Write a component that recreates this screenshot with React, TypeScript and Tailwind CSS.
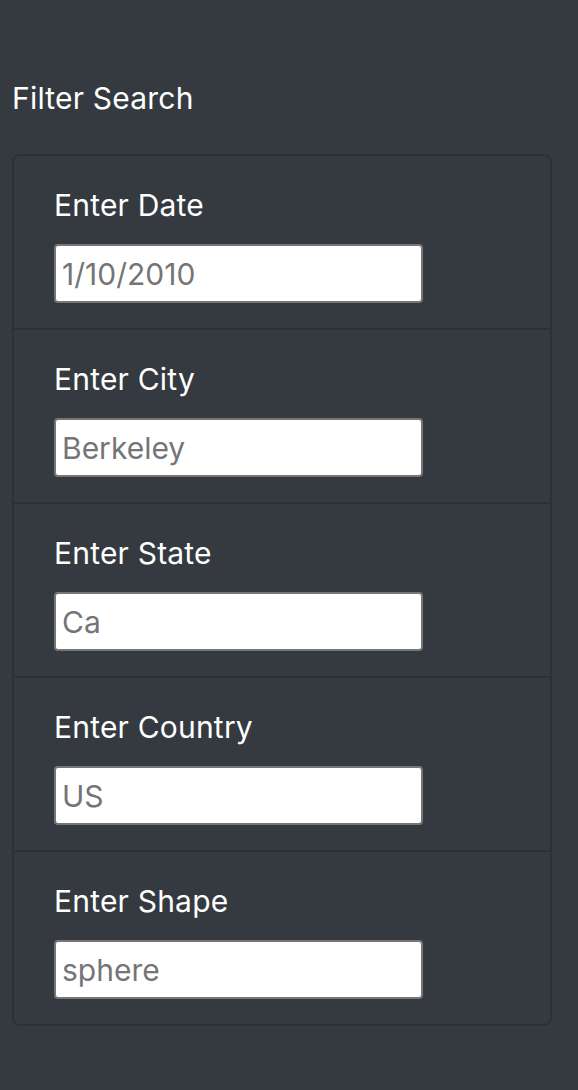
const fields = [
  { label: "Enter Date", value: "1/10/2010" },
  { label: "Enter City", value: "Berkeley" },
  { label: "Enter State", value: "Ca" },
  { label: "Enter Country", value: "US" },
  { label: "Enter Shape", value: "sphere" },
]

export default function App() {
  return (
    <div className="min-h-[1090px] w-[578px] bg-[#343a40] pt-[78px] font-['Inter',sans-serif] text-white">
      <h2 className="pl-3 text-[30px] leading-[40px] tracking-[0.2px]">Filter Search</h2>
      <ul className="mt-[36px] ml-3 mr-[26px] rounded-lg border-2 border-[#2c3135]">
        {fields.map((f, i) => (
          <li
            key={f.label}
            className={`pl-[40px] pt-[25px] ${i > 0 ? "h-[174px] border-t-2 border-[#2c3135]" : "h-[172px]"}`}
          >
            <label className="block text-[30px] leading-[48px] tracking-[0.2px]">{f.label}</label>
            <input
              readOnly
              value={f.value}
              className="mt-[15px] h-[59px] w-[369px] rounded-[4px] border-2 border-[#767676] bg-white px-[6px] text-[30px] text-[#757575] outline-none"
            />
          </li>
        ))}
      </ul>
    </div>
  )
}
